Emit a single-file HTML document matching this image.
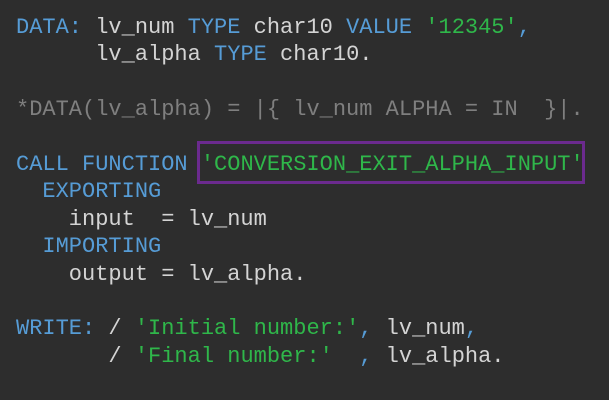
<!DOCTYPE html>
<html><head><style>
html,body{margin:0;padding:0;}
body{width:609px;height:400px;background:#2d2d2d;overflow:hidden;position:relative;}
pre{position:absolute;left:16px;top:14px;margin:0;font-family:"Liberation Mono",monospace;font-size:22px;line-height:27.4px;color:#d4d4d4;letter-spacing:0;}
.k{color:#569cd6}.s{color:#2fb74a}.c{color:#7f7f7f}
.box{position:absolute;left:197px;top:141px;width:382px;height:37px;border:3px solid #6b2a8e;}
</style></head><body>
<div class="box"></div>
<pre><span class="k">DATA:</span> lv_num <span class="k">TYPE</span> char10 <span class="k">VALUE</span> <span class="s">'12345'</span><span class="k">,</span>
      lv_alpha <span class="k">TYPE</span> char10.

<span class="c">*DATA(lv_alpha) = |{ lv_num ALPHA = IN  }|.</span>

<span class="k">CALL FUNCTION</span> <span class="s">'CONVERSION_EXIT_ALPHA_INPUT'</span>
  <span class="k">EXPORTING</span>
    input  = lv_num
  <span class="k">IMPORTING</span>
    output = lv_alpha.

<span class="k">WRITE:</span> / <span class="s">'Initial number:'</span><span class="k">,</span> lv_num<span class="k">,</span>
       / <span class="s">'Final number:'</span>  <span class="k">,</span> lv_alpha.</pre>
</body></html>
